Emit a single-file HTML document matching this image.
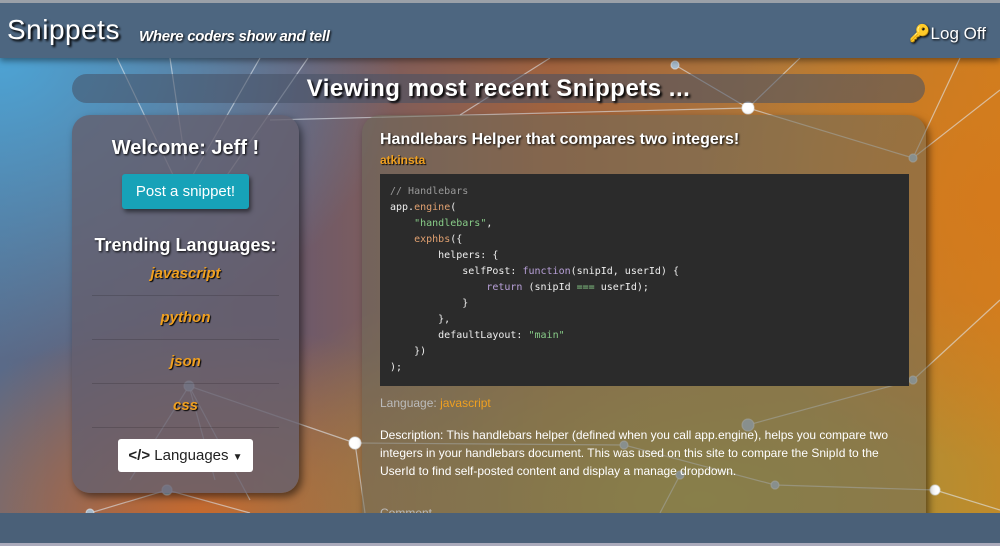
<!DOCTYPE html>
<html><head><meta charset="utf-8"><style>
*{margin:0;padding:0;box-sizing:border-box}
body{width:1000px;height:546px;overflow:hidden;position:relative;font-family:"Liberation Sans","DejaVu Sans",sans-serif;
background:
radial-gradient(ellipse 400px 300px at 0px 60px,#4da3d4 0%,rgba(77,163,212,0) 100%),
radial-gradient(ellipse 300px 260px at 1000px 200px,#d47a1c 0%,rgba(212,122,28,0) 100%),
radial-gradient(ellipse 500px 250px at 700px 500px,#a89a38 0%,rgba(168,154,56,0) 100%),
radial-gradient(ellipse 300px 200px at 200px 520px,#c86a2c 0%,rgba(200,106,44,0) 100%),
linear-gradient(90deg,#5a6a88 0%,#6e5a6a 30%,#a0623e 55%,#b07a3a 80%,#d08020 100%);}
svg.net{position:absolute;left:0;top:0}
.top{position:absolute;left:0;top:0;width:1000px;height:58px;background:#4d6680;border-top:3px solid #9aa0a8;box-shadow:0 3px 6px rgba(0,0,0,.4)}
.logo{position:absolute;left:7px;top:11px;color:#fff;font-size:28px;font-family:"Liberation Sans",sans-serif;letter-spacing:.5px;text-shadow:2px 2px 2px #000}
.tag{position:absolute;left:139px;top:25px;color:#fff;font-size:15px;font-style:italic;font-weight:bold;text-shadow:1px 1px 2px #000;letter-spacing:-.3px}
.logoff{position:absolute;right:14px;top:21px;color:#fff;font-size:17px;text-shadow:1px 1px 2px #000}
.bar{position:absolute;left:72px;top:74px;width:853px;height:29px;border-radius:15px;background:rgba(70,80,100,.55)}
.bar h1{position:absolute;left:0;right:0;top:1px;text-align:center;color:#fff;font-size:24px;font-weight:bold;text-shadow:2px 2px 2px #000;letter-spacing:.5px}
.left{position:absolute;left:72px;top:115px;width:227px;height:378px;border-radius:18px;background:rgba(100,95,110,.8);box-shadow:3px 4px 8px rgba(0,0,0,.5);text-align:center;color:#fff}
.left h2{margin-top:22px;font-size:20px;text-shadow:1px 1px 2px #000}
.post{display:inline-block;margin-top:14px;background:#17a2b8;color:#fff;font-size:15px;padding:9px 14px;border-radius:3px;box-shadow:2px 3px 4px rgba(0,0,0,.5)}
.left h3{margin-top:26px;font-size:18px;text-shadow:1px 1px 2px #000}
.lang{position:absolute;left:20px;width:187px;color:#f0a020;font-style:italic;font-weight:bold;font-size:15px;text-shadow:1px 1px 1px #000;height:44px;line-height:44px;border-bottom:1px solid rgba(0,0,0,.15)}
.ddb{position:absolute;left:46px;top:324px;width:135px;height:33px;background:#fff;border-radius:3px;color:#222;font-size:15px;line-height:33px;text-align:center}
.right{position:absolute;left:362px;top:115px;width:564px;height:420px;border-radius:18px;background:rgba(110,105,90,.55);box-shadow:3px 4px 8px rgba(0,0,0,.5);color:#fff}
.right h4{position:absolute;left:18px;top:16px;font-size:16px;font-weight:bold;text-shadow:1px 1px 2px #000}
.auth{position:absolute;left:18px;top:38px;color:#f0a020;font-weight:bold;font-size:12px;text-shadow:1px 1px 1px #000}
pre{position:absolute;left:18px;top:59px;width:529px;height:212px;background:#2b2b2b;color:#eee;font-family:"DejaVu Sans Mono",monospace;font-size:10px;line-height:16px;padding:10px 10px}
.c{color:#999}.o{color:#e0a070}.g{color:#8c8}.p{color:#b8a0d8}
.lg{position:absolute;left:18px;top:281px;font-size:12px;color:#bbb}
.lg b{color:#f0a020;font-weight:normal}
.desc{position:absolute;left:18px;top:311px;width:535px;font-size:12px;line-height:18px}
.cm{position:absolute;left:18px;top:391px;font-size:12px;color:#bbb}
.foot{position:absolute;left:0;top:513px;width:1000px;height:33px;background:#4a6078;border-bottom:3px solid #aab}
</style></head><body>
<svg class="net" width="1000" height="546" stroke="rgba(225,232,238,.6)" stroke-width="1.2" fill="#a8bccc">
<line x1="117" y1="58" x2="185" y2="200"/><line x1="170" y1="58" x2="185" y2="160"/><line x1="260" y1="58" x2="190" y2="180"/><line x1="308" y1="58" x2="210" y2="200"/>
<line x1="270" y1="120" x2="748" y2="108"/><line x1="748" y1="108" x2="913" y2="158"/><line x1="675" y1="65" x2="748" y2="108"/>
<line x1="800" y1="58" x2="748" y2="108"/><line x1="960" y1="58" x2="913" y2="158"/><line x1="1000" y1="90" x2="913" y2="158"/>
<line x1="189" y1="386" x2="355" y2="443"/><line x1="189" y1="386" x2="130" y2="480"/><line x1="189" y1="386" x2="250" y2="500"/><line x1="189" y1="386" x2="215" y2="480"/>
<line x1="355" y1="443" x2="624" y2="445"/><line x1="624" y1="445" x2="775" y2="485"/><line x1="775" y1="485" x2="935" y2="490"/><line x1="748" y1="425" x2="913" y2="380"/>
<line x1="355" y1="443" x2="365" y2="513"/><line x1="167" y1="490" x2="90" y2="513"/><line x1="167" y1="490" x2="250" y2="513"/><line x1="680" y1="475" x2="660" y2="513"/>
<line x1="935" y1="490" x2="1000" y2="510"/><line x1="913" y1="380" x2="1000" y2="300"/><line x1="550" y1="58" x2="460" y2="115"/>
<circle cx="748" cy="108" r="6" fill="#fff"/><circle cx="913" cy="158" r="4"/><circle cx="675" cy="65" r="4"/><circle cx="189" cy="386" r="5"/>
<circle cx="355" cy="443" r="6" fill="#fff"/><circle cx="624" cy="445" r="4"/><circle cx="748" cy="425" r="6"/><circle cx="913" cy="380" r="4"/>
<circle cx="775" cy="485" r="4"/><circle cx="935" cy="490" r="5" fill="#fff"/><circle cx="167" cy="490" r="5"/><circle cx="90" cy="513" r="4"/><circle cx="680" cy="475" r="4"/>
</svg>
<div class="top"><div class="logo">Snippets</div><div class="tag">Where coders show and tell</div><div class="logoff">🔑Log Off</div></div>
<div class="bar"><h1>Viewing most recent Snippets ...</h1></div>
<div class="left"><h2>Welcome: Jeff !</h2><div class="post">Post a snippet!</div><h3>Trending Languages:</h3>
<div class="lang" style="top:137px">javascript</div><div class="lang" style="top:181px">python</div><div class="lang" style="top:225px">json</div><div class="lang" style="top:269px">css</div>
<div class="ddb"><b>&lt;/&gt;</b> Languages <span style="font-size:10px">▼</span></div></div>
<div class="right"><h4>Handlebars Helper that compares two integers!</h4><div class="auth">atkinsta</div>
<pre><span class="c">// Handlebars</span>
app.<span class="o">engine</span>(
    <span class="g">"handlebars"</span>,
    <span class="o">exphbs</span>({
        helpers: {
            selfPost: <span class="p">function</span>(snipId, userId) {
                <span class="p">return</span> (snipId <span class="g">===</span> userId);
            }
        },
        defaultLayout: <span class="g">"main"</span>
    })
);</pre>
<div class="lg">Language: <b>javascript</b></div>
<div class="desc">Description: This handlebars helper (defined when you call app.engine), helps you compare two integers in your handlebars document. This was used on this site to compare the SnipId to the UserId to find self-posted content and display a manage dropdown.</div>
<div class="cm">Comment</div></div>
<div class="foot"></div>
</body></html>
